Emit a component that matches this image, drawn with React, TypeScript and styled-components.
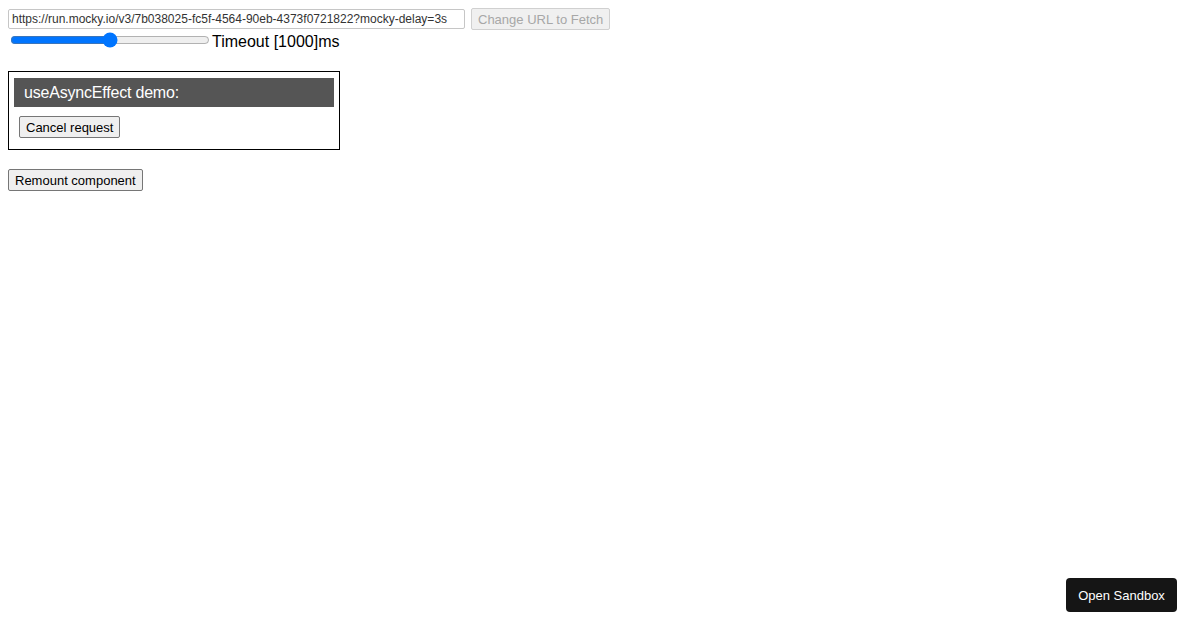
import React from "react";
import styled, { createGlobalStyle } from "styled-components";

const Global = createGlobalStyle`
  body {
    margin: 8px;
    font-family: "Liberation Sans", Arial, sans-serif;
    font-size: 16px;
    background: #fff;
    color: #000;
  }
  button, input {
    font-family: "Liberation Sans", Arial, sans-serif;
  }
`;

const Row = styled.div`
  display: flex;
  align-items: center;
  gap: 6px;
  height: 22px;
`;

const UrlInput = styled.input`
  box-sizing: border-box;
  width: 457px;
  height: 20px;
  font-size: 12px;
  padding: 1px 3px;
  border: 1px solid #c6c6c6;
  border-radius: 2px;
  color: #333;
  background: #fff;
`;

const Button = styled.button`
  box-sizing: border-box;
  height: 22px;
  font-size: 13px;
  padding: 1px 6px;
  border: 1px solid #767676;
  border-radius: 2px;
  background: #efefef;
  color: #000;
  &:disabled {
    color: #a7a7a7;
    border-color: #d0d0d0;
    background: #f0f0f0;
  }
`;

const SliderRow = styled.div`
  display: flex;
  align-items: center;
  height: 21px;
`;

const Range = styled.input`
  width: 200px;
  margin: 0 2px 1px 2px;
  accent-color: #0075ff;
`;

const Label = styled.span`
  font-size: 16px;
  line-height: 18px;
  margin-top: 3px;
`;

const Box = styled.div`
  box-sizing: border-box;
  margin-top: 20px;
  width: 332px;
  height: 79px;
  border: 1px solid #000;
  padding: 6px 5px;
`;

const Header = styled.div`
  background: #555;
  color: #fff;
  height: 29px;
  line-height: 29px;
  padding-left: 10px;
  font-size: 16px;
  letter-spacing: -0.2px;
`;

const BoxBody = styled.div`
  padding: 9px 0 0 5px;
`;

const Remount = styled(Button)`
  margin-top: 19px;
`;

const SandboxButton = styled.a`
  position: fixed;
  right: 23px;
  bottom: 18px;
  box-sizing: border-box;
  width: 111px;
  height: 34px;
  display: flex;
  align-items: center;
  justify-content: center;
  background: #151515;
  color: #fff;
  border-radius: 4px;
  font-family: "Liberation Sans", Arial, sans-serif;
  font-size: 13px;
  text-decoration: none;
`;

export default function App() {
  return (
    <>
      <Global />
      <Row>
        <UrlInput
          readOnly
          value="https://run.mocky.io/v3/7b038025-fc5f-4564-90eb-4373f0721822?mocky-delay=3s"
        />
        <Button disabled>Change URL to Fetch</Button>
      </Row>
      <SliderRow>
        <Range type="range" min={0} max={2000} defaultValue={1000} />
        <Label>Timeout [1000]ms</Label>
      </SliderRow>
      <Box>
        <Header>useAsyncEffect demo:</Header>
        <BoxBody>
          <Button>Cancel request</Button>
        </BoxBody>
      </Box>
      <Remount>Remount component</Remount>
      <SandboxButton href="#">Open Sandbox</SandboxButton>
    </>
  );
}
